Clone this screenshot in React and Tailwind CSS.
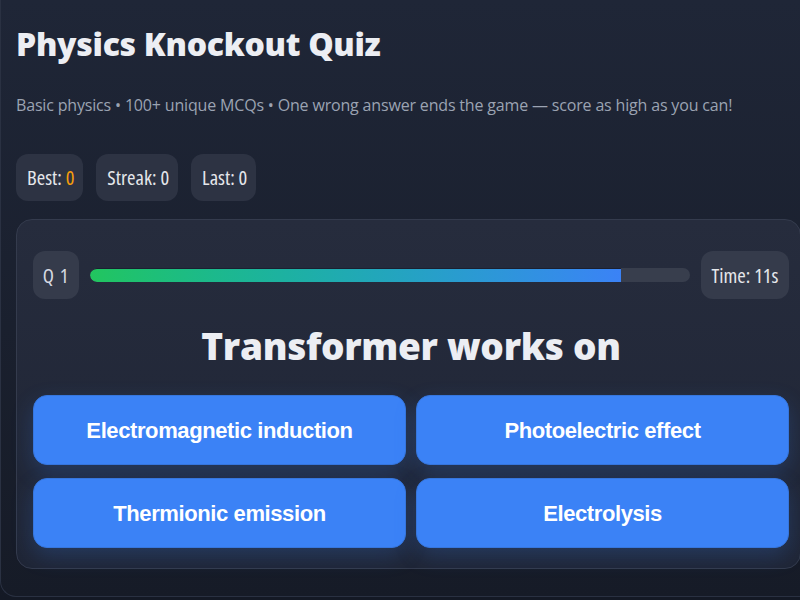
const options = [
  'Electromagnetic induction',
  'Photoelectric effect',
  'Thermionic emission',
  'Electrolysis',
];

const Stat = ({ label, value, accent }) => (
  <div className="h-[47px] pl-[11px] pr-[9px] flex items-center rounded-xl bg-[#2d3343] text-[20.5px] text-[#e5e7eb] font-stretch-[75%]">
    {label}:&nbsp;<span className={accent ? 'text-[#f59e0b]' : ''}>{value}</span>
  </div>
);

export default function App() {
  const progress = 0.885;

  return (
    <div className="w-screen h-screen overflow-hidden bg-gradient-to-b from-[#1f2637] to-[#141925] font-['Open_Sans',sans-serif]">
      <div className="w-[830px] h-[597px] rounded-b-2xl border-b border-l border-[#2a3142] px-[15px] pt-[24px] bg-gradient-to-b from-[#1f2637] to-[#161b27]">
        <h1 className="text-[32px] leading-[40px] font-black text-[#eceef3] tracking-[-0.3px]">
          Physics Knockout Quiz
        </h1>
        <p className="mt-[29px] text-[16px] leading-6 text-[#9ba3b2] tracking-[-0.17px] whitespace-nowrap">
          Basic physics • 100+ unique MCQs • One wrong answer ends the game — score as high as you can!
        </p>

        <div className="mt-[37px] flex gap-[13px]">
          <Stat label="Best" value="0" accent />
          <Stat label="Streak" value="0" />
          <Stat label="Last" value="0" />
        </div>

        <div className="mt-[18px] w-[785px] h-[350px] rounded-2xl border border-[#343b4d] bg-gradient-to-b from-[#262c3d] to-[#1f2535] pt-[31px] pl-[16px] pr-[11px]">
          <div className="flex items-center gap-[11px]">
            <div className="w-[46px] h-[48px] rounded-xl bg-[#353b4b] flex items-center justify-center text-[20.5px] text-[#d6d9e0] font-stretch-[75%] tracking-[1px]">
              Q 1
            </div>
            <div className="flex-1 h-[14px] rounded-full bg-[#383e4d] overflow-hidden">
              <div
                className="h-full rounded-l-full bg-gradient-to-r from-[#22c55e] to-[#3b82f6] border-t border-[#1b2030]"
                style={{ width: `${progress * 100}%` }}
              />
            </div>
            <div className="w-[88px] h-[48px] rounded-xl bg-[#353b4b] flex items-center justify-center text-[20.5px] text-[#e5e7eb] font-stretch-[75%]">
              Time: 11s
            </div>
          </div>

          <h2 className="mt-[19px] text-center text-[37px] leading-[56px] font-black text-[#eceef3] tracking-[-0.3px]">
            Transformer works on
          </h2>

          <div className="mt-[21px] grid grid-cols-2 gap-x-[10px] gap-y-[13px]">
            {options.map((opt) => (
              <button
                key={opt}
                className="h-[70px] rounded-[14px] bg-[#3b82f6] border border-[#3676dd] text-white text-[22px] font-bold font-['Liberation_Sans',Arial,sans-serif] tracking-[-0.4px] shadow-[0_8px_22px_rgba(59,130,246,0.22)]"
              >
                {opt}
              </button>
            ))}
          </div>
        </div>
      </div>
    </div>
  );
}
